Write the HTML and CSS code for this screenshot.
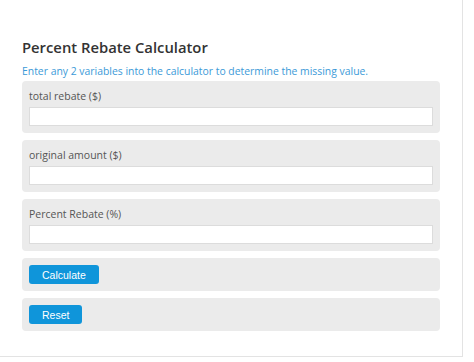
FILE: index.html
```html
<!DOCTYPE html>
<html>
<head>
<meta charset="UTF-8">
<title>Percent Rebate Calculator</title>
<link rel="stylesheet" href="styles.css">
</head>
<body>
    <div id="container">
        <h2 class="title">Percent Rebate Calculator</h2>
        <p class="intro">Enter any 2 variables into the calculator to determine the missing value.</p>
        <form class="calc">
            <div class="row">
                <label for="total-rebate">total rebate ($)</label>
                <input type="text" id="total-rebate" name="total-rebate">
            </div>
            <div class="row">
                <label for="original-amount">original amount ($)</label>
                <input type="text" id="original-amount" name="original-amount">
            </div>
            <div class="row">
                <label for="percent-rebate">Percent Rebate (%)</label>
                <input type="text" id="percent-rebate" name="percent-rebate">
            </div>
            <div class="row">
                <input type="button" class="btn" value="Calculate">
            </div>
            <div class="row">
                <input type="reset" class="btn" value="Reset">
            </div>
        </form>
    </div>
</body>
</html>
```

FILE: styles.css
```css
* {
margin: 0;
padding: 0;
box-sizing: border-box;
}

html, body {
background-color: #fff;
font-family: "Open Sans", "DejaVu Sans", sans-serif;
}

#container {
width: 463px;
height: 357px;
padding: 36px 22px 0 22px;
border-right: 1px solid #e3e3e3;
border-bottom: 1px solid #e3e3e3;
}

.title {
font-size: 14.8px;
line-height: 22px;
font-weight: 600;
color: #333;
}

.intro {
margin-top: 5px;
font-size: 10.4px;
line-height: 16px;
color: #3b9ad8;
}

.calc {
margin-top: 2px;
display: flex;
flex-direction: column;
gap: 7px;
}

.row {
display: flex;
flex-direction: column;
align-items: flex-start;
padding: 7px;
background-color: #ebebeb;
border-radius: 4px;
}

.row label {
font-size: 10.5px;
line-height: 17px;
color: #555;
margin-bottom: 2px;
}

.row input[type=text] {
width: 100%;
height: 19px;
border: 1px solid #dcdcdc;
background-color: #fff;
outline: 0;
}

.btn {
height: 19px;
padding: 0 13px;
border: 0;
border-radius: 3px;
background-color: #0f95da;
color: #fff;
font-family: "Liberation Sans", Arial, sans-serif;
font-size: 10.5px;
cursor: pointer;
}
```
